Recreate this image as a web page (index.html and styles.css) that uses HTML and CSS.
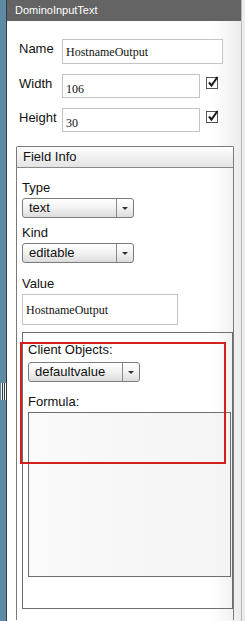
FILE: index.html
```html
<!DOCTYPE html>
<html lang="en">
<head>
    <meta charset="UTF-8">
    <meta name="viewport" content="width=device-width, initial-scale=1.0">
    <title>DominoInputText</title>
    <link rel="stylesheet" href="styles.css">
</head>
<body>
    <div class="app">
        <div class="splitter">
            <div class="grip"></div>
        </div>

        <div class="panel">
            <div class="panel-title">DominoInputText</div>

            <div class="props">
                <div class="prop-row">
                    <span class="prop-label">Name</span>
                    <div class="text-field name-field">HostnameOutput</div>
                </div>
                <div class="prop-row">
                    <span class="prop-label">Width</span>
                    <div class="text-field size-field">106</div>
                    <svg class="check" width="14" height="14" viewBox="0 0 14 14">
                        <rect x="0.5" y="1.5" width="11" height="11" fill="#fff" stroke="#555"/>
                        <path d="M3 6.5 L5.5 9.5 L11.5 1" fill="none" stroke="#1a1a1a" stroke-width="2"/>
                    </svg>
                </div>
                <div class="prop-row">
                    <span class="prop-label">Height</span>
                    <div class="text-field size-field">30</div>
                    <svg class="check" width="14" height="14" viewBox="0 0 14 14">
                        <rect x="0.5" y="1.5" width="11" height="11" fill="#fff" stroke="#555"/>
                        <path d="M3 6.5 L5.5 9.5 L11.5 1" fill="none" stroke="#1a1a1a" stroke-width="2"/>
                    </svg>
                </div>
            </div>

            <div class="field-info">
                <div class="field-info-header">Field Info</div>
                <div class="field-info-body">
                    <div class="field-label">Type</div>
                    <div class="select"><span class="select-text">text</span><span class="select-arrow"></span></div>

                    <div class="field-label kind-label">Kind</div>
                    <div class="select"><span class="select-text">editable</span><span class="select-arrow"></span></div>

                    <div class="field-label value-label">Value</div>
                    <div class="text-field value-field">HostnameOutput</div>

                    <div class="scripting">
                        <div class="highlight"></div>
                        <div class="field-label">Client Objects:</div>
                        <div class="select"><span class="select-text">defaultvalue</span><span class="select-arrow"></span></div>
                        <div class="field-label formula-label">Formula:</div>
                        <div class="formula"></div>
                    </div>
                </div>
            </div>
        </div>

        <div class="edge"></div>
    </div>
</body>
</html>
```

FILE: styles.css
```css
html, body {
    margin: 0;
    padding: 0;
    height: 100%;
    overflow: hidden;
}

body {
    font-family: "Liberation Sans", Arial, sans-serif;
    font-size: 13px;
    color: #111;
}

.app {
    display: flex;
    height: 621px;
}

.splitter {
    box-sizing: border-box;
    width: 7px;
    background-color: #5f8aa3;
    border-right: 1px solid #2f3d46;
    padding-top: 383px;
}

.grip {
    width: 5px;
    height: 17px;
    margin-left: 1px;
    background: repeating-linear-gradient(90deg, #f4f4f4 0 1px, #3a3a3a 1px 2px);
}

.panel {
    flex: 1;
    overflow: hidden;
    background: linear-gradient(to right, #fff 0, #fff 205px, #ececec 234px);
}

.edge {
    width: 3px;
    border-left: 1px solid #b8b8b8;
    background-color: #ededed;
}

.panel-title {
    height: 21px;
    line-height: 21px;
    padding-left: 8px;
    background-color: #646464;
    color: #fff;
    font-size: 11px;
}

.props {
    padding: 18px 0 0 12px;
}

.prop-row {
    display: flex;
    align-items: flex-start;
    margin-bottom: 10px;
}

.prop-row + .prop-row + .prop-row {
    margin-top: 1px;
    margin-bottom: 14px;
}

.prop-label {
    width: 43px;
    padding-top: 2px;
    line-height: 15px;
}

.text-field {
    box-sizing: border-box;
    border: 1px solid #c4c4c4;
    background-color: #fff;
    font-family: "Liberation Serif", "Times New Roman", serif;
    font-size: 12px;
    line-height: 14px;
    padding-left: 3px;
    color: #111;
}

.name-field {
    width: 161px;
    height: 25px;
    padding-top: 5px;
}

.size-field {
    width: 138px;
    height: 24px;
    padding-top: 7px;
}

.check {
    margin: 2px 0 0 6px;
}

.field-info {
    margin: 0 7px 0 9px;
    border: 1px solid #7a7a7a;
    border-bottom: none;
    border-radius: 2px 2px 0 0;
}

.field-info-header {
    height: 20px;
    line-height: 20px;
    padding-left: 6px;
    background: linear-gradient(#fdfdfd, #e4e4e4);
    border-bottom: 1px solid #8a8a8a;
}

.field-info-body {
    box-sizing: border-box;
    height: 452px;
    padding: 12px 0 0 5px;
}

.field-label {
    line-height: 15px;
    margin-bottom: 3px;
}

.kind-label {
    margin-top: 7px;
}

.value-label {
    margin-top: 13px;
}

.select {
    position: relative;
    display: flex;
    box-sizing: border-box;
    width: 112px;
    height: 20px;
    border: 1px solid #7c7c7c;
    border-radius: 3px;
    background: linear-gradient(#ffffff, #f2f2f2 50%, #dcdcdc);
    line-height: 18px;
}

.select-text {
    flex: 1;
    padding-left: 6px;
}

.select-arrow {
    position: relative;
    width: 16px;
    border-left: 1px solid #8a8a8a;
}

.select-arrow::after {
    content: "";
    position: absolute;
    left: 5px;
    top: 8px;
    border-left: 3px solid transparent;
    border-right: 3px solid transparent;
    border-top: 3px solid #333;
}

.value-field {
    width: 156px;
    height: 31px;
    padding-top: 8px;
}

.scripting {
    position: relative;
    box-sizing: border-box;
    margin-top: 7px;
    width: 211px;
    height: 277px;
    border: 1px solid #6e6e6e;
    padding: 9px 0 0 5px;
}

.highlight {
    position: absolute;
    left: -3px;
    top: 9px;
    width: 206px;
    height: 122px;
    box-sizing: border-box;
    border: 2px solid #d3201f;
}

.scripting .field-label {
    margin-bottom: 5px;
}

.scripting .formula-label {
    margin-top: 12px;
    margin-bottom: 3px;
}

.formula {
    box-sizing: border-box;
    width: 203px;
    height: 165px;
    border: 1px solid #6e6e6e;
    background: linear-gradient(to right, #fafafa, #f4f4f4);
}
```
